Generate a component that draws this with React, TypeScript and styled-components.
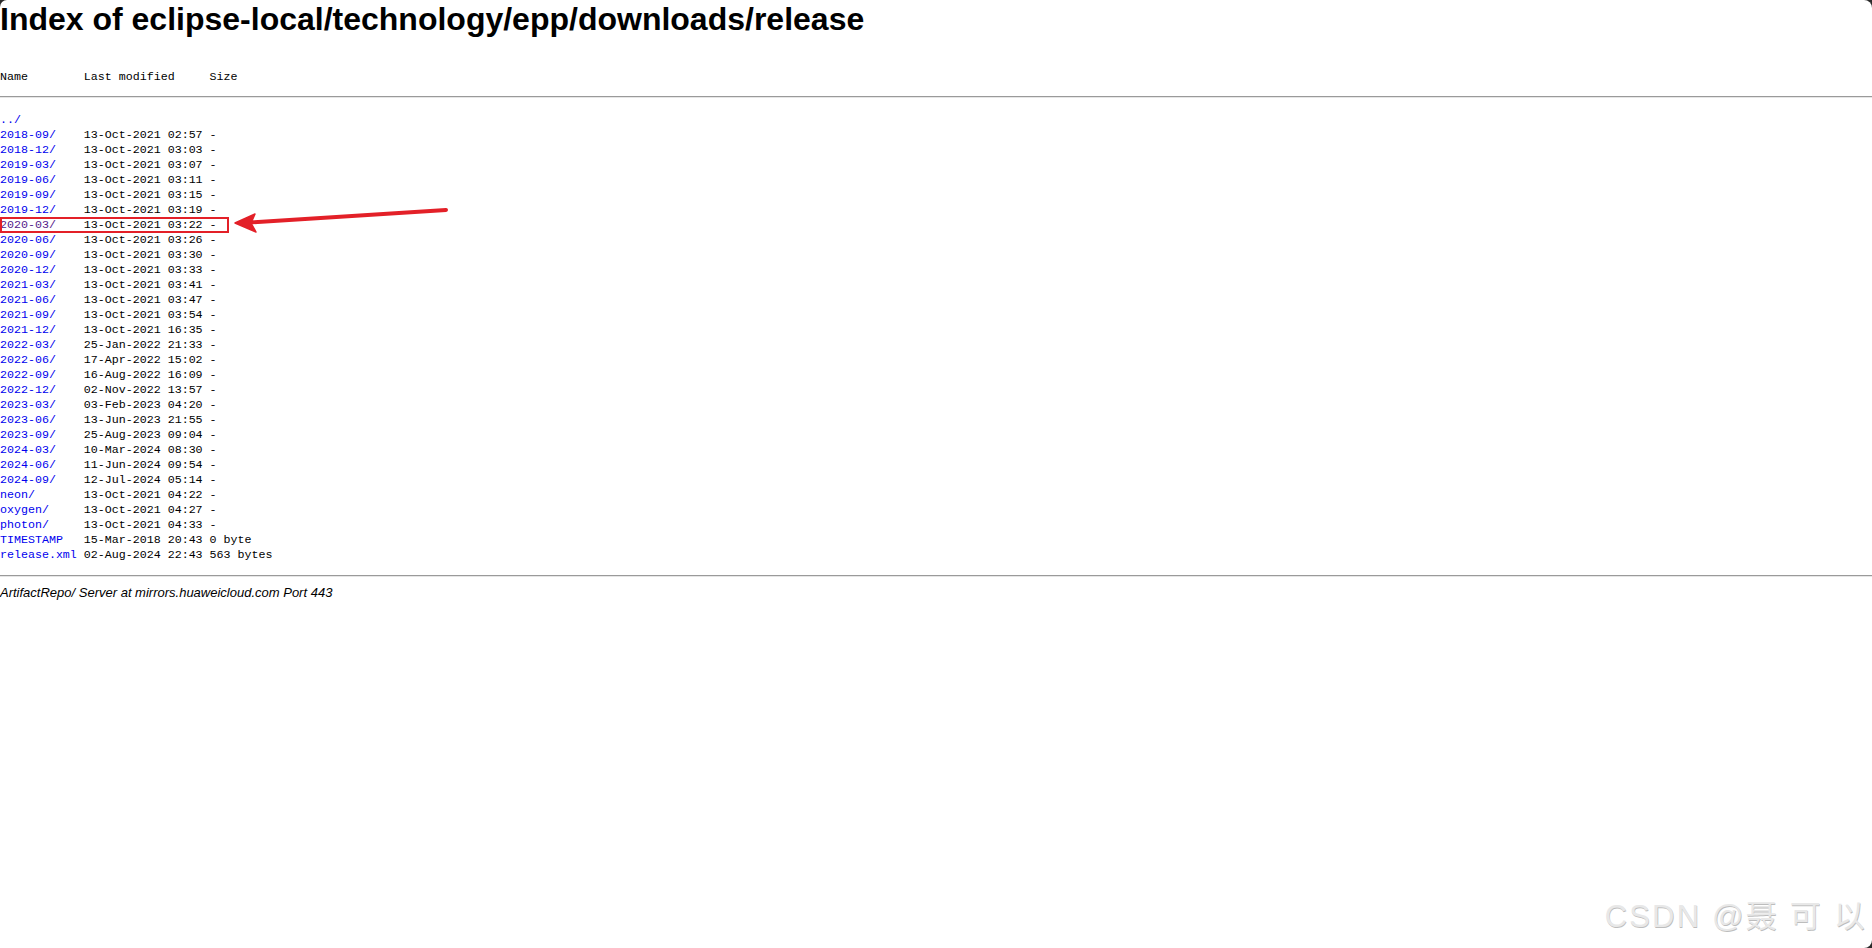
import React from "react";
import styled, { createGlobalStyle } from "styled-components";

const GlobalStyle = createGlobalStyle`
  html, body { margin: 0; padding: 0; background: #2b2b2b; }
  body { font-family: "Liberation Serif", serif; }
`;

const Window = styled.div`
  position: relative;
  min-height: 948px;
  box-sizing: border-box;
  background: #ffffff;
  border-radius: 7px 8px 8px 0;
  overflow: hidden;
`;

const Title = styled.h1`
  margin: 0;
  padding-top: 1px;
  font-family: "Liberation Sans", Arial, sans-serif;
  font-weight: bold;
  font-size: 32px;
  line-height: 37px;
  color: #000;
  white-space: nowrap;
`;

const Mono = styled.pre`
  margin: 0;
  font-family: "Liberation Mono", "Courier New", monospace;
  font-size: 11.65px;
  line-height: 15px;
  color: #000;
  white-space: pre;
`;

const HeaderLine = styled(Mono)`
  margin-top: 31px;
`;

const Rule = styled.hr<{ $gap: number }>`
  margin: ${(p) => p.$gap}px 0 0;
  height: 0;
  border: 0;
  border-top: 1px solid #9a9a9a;
  border-bottom: 1px solid #e6e6e6;
`;

const Listing = styled(Mono)`
  margin-top: 14px;
`;

const Row = styled.div`
  position: relative;
  height: 15px;
`;

const Link = styled.a<{ $visited?: boolean }>`
  color: ${(p) => (p.$visited ? "#551a8b" : "#0000ee")};
  text-decoration: none;
`;

const Highlight = styled.span`
  position: absolute;
  left: 0;
  top: 0;
  width: 229px;
  height: 16px;
  box-sizing: border-box;
  border: 2px solid #e32028;
  pointer-events: none;
`;

const Footer = styled.address`
  margin-top: 8px;
  font-family: "Liberation Sans", Arial, sans-serif;
  font-style: italic;
  font-size: 13px;
  line-height: 15px;
  color: #000;
`;

const ArrowSvg = styled.svg`
  position: absolute;
  left: 0;
  top: 0;
  pointer-events: none;
`;

const Watermark = styled.div`
  position: absolute;
  right: 5px;
  bottom: 13px;
  font-family: "Liberation Sans", "Noto Sans CJK SC", sans-serif;
  font-size: 31px;
  line-height: 36px;
  color: #e8e8e8;
  letter-spacing: 2.2px;
  text-shadow: 0.6px 0.6px 0.4px #bdbdbd;
  white-space: pre;
`;

type Entry = { name: string; date: string; size: string; visited?: boolean };

const entries: Entry[] = [
  { name: "2018-09/", date: "13-Oct-2021 02:57", size: "-" },
  { name: "2018-12/", date: "13-Oct-2021 03:03", size: "-" },
  { name: "2019-03/", date: "13-Oct-2021 03:07", size: "-" },
  { name: "2019-06/", date: "13-Oct-2021 03:11", size: "-" },
  { name: "2019-09/", date: "13-Oct-2021 03:15", size: "-" },
  { name: "2019-12/", date: "13-Oct-2021 03:19", size: "-" },
  { name: "2020-03/", date: "13-Oct-2021 03:22", size: "-", visited: true },
  { name: "2020-06/", date: "13-Oct-2021 03:26", size: "-" },
  { name: "2020-09/", date: "13-Oct-2021 03:30", size: "-" },
  { name: "2020-12/", date: "13-Oct-2021 03:33", size: "-" },
  { name: "2021-03/", date: "13-Oct-2021 03:41", size: "-" },
  { name: "2021-06/", date: "13-Oct-2021 03:47", size: "-" },
  { name: "2021-09/", date: "13-Oct-2021 03:54", size: "-" },
  { name: "2021-12/", date: "13-Oct-2021 16:35", size: "-" },
  { name: "2022-03/", date: "25-Jan-2022 21:33", size: "-" },
  { name: "2022-06/", date: "17-Apr-2022 15:02", size: "-" },
  { name: "2022-09/", date: "16-Aug-2022 16:09", size: "-" },
  { name: "2022-12/", date: "02-Nov-2022 13:57", size: "-" },
  { name: "2023-03/", date: "03-Feb-2023 04:20", size: "-" },
  { name: "2023-06/", date: "13-Jun-2023 21:55", size: "-" },
  { name: "2023-09/", date: "25-Aug-2023 09:04", size: "-" },
  { name: "2024-03/", date: "10-Mar-2024 08:30", size: "-" },
  { name: "2024-06/", date: "11-Jun-2024 09:54", size: "-" },
  { name: "2024-09/", date: "12-Jul-2024 05:14", size: "-" },
  { name: "neon/", date: "13-Oct-2021 04:22", size: "-" },
  { name: "oxygen/", date: "13-Oct-2021 04:27", size: "-" },
  { name: "photon/", date: "13-Oct-2021 04:33", size: "-" },
  { name: "TIMESTAMP", date: "15-Mar-2018 20:43", size: "0 byte" },
  { name: "release.xml", date: "02-Aug-2024 22:43", size: "563 bytes" },
];

const pad = (s: string, n: number) => " ".repeat(Math.max(1, n - s.length));

export default function App() {
  return (
    <>
      <GlobalStyle />
      <Window>
        <Title>Index of eclipse-local/technology/epp/downloads/release</Title>
        <HeaderLine>{"Name        Last modified     Size"}</HeaderLine>
        <Rule $gap={12} />
        <Listing>
          <Row>
            <Link href="#">../</Link>
          </Row>
          {entries.map((e) => (
            <Row key={e.name}>
              <Link href="#" $visited={e.visited}>
                {e.name}
              </Link>
              {pad(e.name, 12)}
              {e.date} {e.size}
              {e.visited && <Highlight />}
            </Row>
          ))}
        </Listing>
        <Rule $gap={13} />
        <Footer>ArtifactRepo/ Server at mirrors.huaweicloud.com Port 443</Footer>
        <ArrowSvg width="460" height="240" viewBox="0 0 460 240">
          <line
            x1="446"
            y1="210"
            x2="250"
            y2="222.5"
            stroke="#e32028"
            strokeWidth="4"
            strokeLinecap="round"
          />
          <polygon points="235,223 255,214 251,223 256,232" fill="#e32028" stroke="#e32028" strokeWidth="1.5" strokeLinejoin="round" />
        </ArrowSvg>
        <Watermark>CSDN @聂 可 以</Watermark>
      </Window>
    </>
  );
}
